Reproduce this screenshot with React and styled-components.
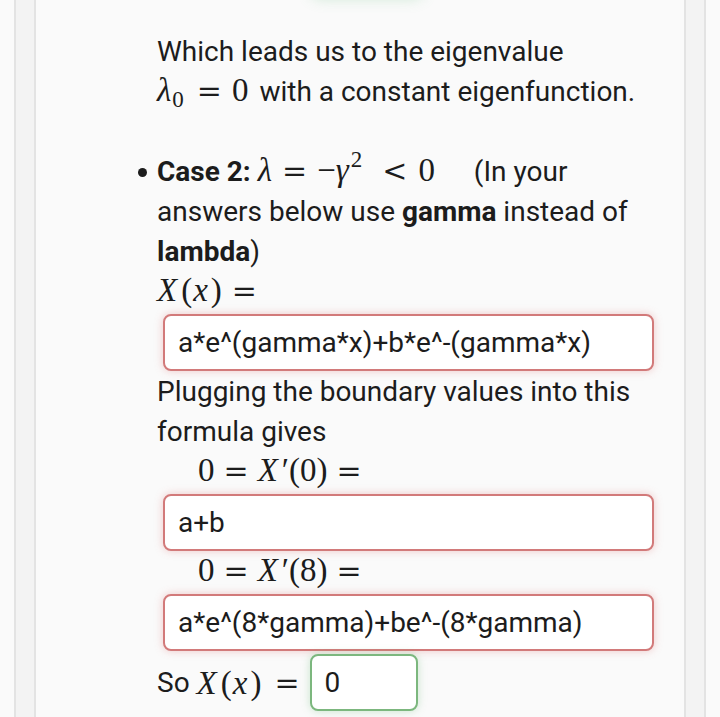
import React from 'react';
import styled, { createGlobalStyle } from 'styled-components';

const Global = createGlobalStyle`
    html, body {
        margin: 0;
        padding: 0;
        background: #fafafa;
        overflow: hidden;
    }
`;

const Page = styled.div`
    width: 720px;
    height: 717px;
    display: flex;
    background: #fafafa;
    overflow: hidden;
`;

const Frame = styled.div`
    box-sizing: border-box;
    margin-left: 14px;
    width: 692px;
    display: flex;
    background: #f3f3f3;
    border-left: 2px solid #e3e3e3;
    border-right: 2px solid #e3e3e3;
    padding: 0 18px;
`;

const Panel = styled.div`
    flex-grow: 1;
    background: #fafafa;
    border-left: 2px solid #e3e3e3;
    border-right: 2px solid #e3e3e3;
    padding: 32px 8px 0 121px;
    font-family: Roboto, "Liberation Sans", sans-serif;
    font-size: 28px;
    line-height: 40px;
    color: #1c1c1c;
`;

const PrevGlow = styled.div`
    width: 108px;
    height: 40px;
    margin: -76px 0 36px 156px;
    border-radius: 8px;
    box-shadow: 0 0 14px 3px rgba(120, 200, 140, 0.3);
`;

const P = styled.div``;

const List = styled.ul`
    margin: 40px 0 0;
    padding: 0;
    list-style: none;
`;

const Item = styled.li`
    position: relative;

    &::before {
        content: '';
        position: absolute;
        left: -19px;
        top: 16px;
        width: 9px;
        height: 9px;
        border-radius: 50%;
        background: #1c1c1c;
    }
`;

const M = styled.span`
    font-family: "Liberation Serif", "DejaVu Serif", serif;
    font-size: 33px;
    line-height: 20px;
    font-style: ${(p) => (p.$i ? 'italic' : 'normal')};
    margin: 0 ${(p) => p.$r || 0}px 0 ${(p) => p.$l || 0}px;
`;

const Op = styled.span`
    font-family: "DejaVu Serif", "Liberation Serif", serif;
    font-size: 30px;
    line-height: 20px;
    margin: 0 ${(p) => (p.$r != null ? p.$r : 9)}px 0 ${(p) => (p.$l != null ? p.$l : 9)}px;
`;

const Sub = styled.sub`
    font-family: "Liberation Serif", serif;
    font-size: 23px;
    vertical-align: -6px;
    line-height: 0;
    margin-right: 2px;
`;

const Sup = styled.sup`
    font-family: "Liberation Serif", serif;
    font-size: 23px;
    vertical-align: 14px;
    line-height: 0;
    margin-left: 2px;
`;

const Quad = styled.span`
    display: inline-block;
    width: 32px;
`;

const B = styled.b`
    font-weight: 700;
`;

const Indent = styled.div`
    padding-left: 41px;
`;

const Input = styled.div`
    box-sizing: border-box;
    margin: ${(p) => (p.$inline ? '0' : '2px 0 1px 6px')};
    width: ${(p) => (p.$inline ? '108px' : '491px')};
    height: 57px;
    display: ${(p) => (p.$inline ? 'inline-flex' : 'flex')};
    flex-shrink: 0;
    align-items: center;
    vertical-align: middle;
    padding-left: 13px;
    background: #fff;
    border: 2px solid ${(p) => (p.$ok ? '#7cb77e' : '#d27a7a')};
    border-radius: 8px;
    box-shadow: 0 0 8px ${(p) => (p.$ok ? 'rgba(110, 190, 120, 0.35)' : 'rgba(220, 110, 110, 0.35)')};
    font-family: Roboto, "Liberation Sans", sans-serif;
    font-size: 28px;
    line-height: 40px;
    color: #1c1c1c;
`;

const SoLine = styled.div`
    display: flex;
    align-items: center;
    margin-top: 3px;
    height: 57px;
`;

const Xx = () => (
    <>
        <M $i $r={4}>X</M><M $r={1}>(</M><M $i $r={3}>x</M><M $r={1}>)</M>
    </>
);

const App = () => {
    return (
        <Page>
            <Global />
            <Frame>
                <Panel>
                    <PrevGlow />
                    <P>
                        Which leads us to the eigenvalue
                        <br />
                        <M $i $r={1}>λ</M><Sub>0</Sub><Op $l={11} $r={10}>=</Op><M $r={4}>0</M> with a constant eigenfunction.
                    </P>
                    <List>
                        <Item>
                            <B>Case 2:</B> <M $i>λ</M><Op $l={10} $r={10}>=</Op><M>−</M><M $i>γ</M><Sup>2</Sup><Op $l={20} $r={11}>&lt;</Op><M>0</M>
                            <Quad /> (In your answers below use <B>gamma</B> instead of <B>lambda</B>)
                            <br />
                            <Xx /><Op>=</Op>
                            <Input>a*e^(gamma*x)+b*e^-(gamma*x)</Input>
                            Plugging the boundary values into this formula gives
                            <Indent>
                                <M>0</M><Op>=</Op><M $i $r={4}>X</M><M>′(0)</M><Op>=</Op>
                            </Indent>
                            <Input>a+b</Input>
                            <Indent>
                                <M>0</M><Op>=</Op><M $i $r={4}>X</M><M>′(8)</M><Op>=</Op>
                            </Indent>
                            <Input>a*e^(8*gamma)+be^-(8*gamma)</Input>
                            <SoLine>
                                So&nbsp;<Xx /><Op $l={12} $r={10}>=</Op>
                                <Input $inline $ok>0</Input>
                            </SoLine>
                        </Item>
                    </List>
                </Panel>
            </Frame>
        </Page>
    );
};

export default App;
